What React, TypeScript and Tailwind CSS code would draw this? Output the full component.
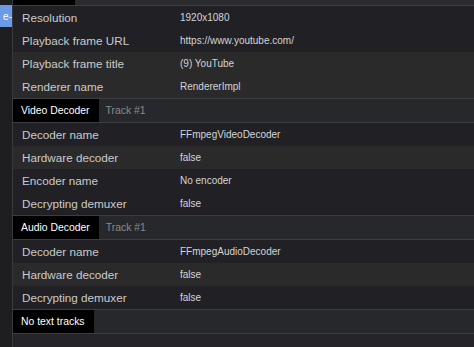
type Row = { label: string; value: string; alt?: boolean };

const topRows: Row[] = [
  { label: 'Resolution', value: '1920x1080' },
  { label: 'Playback frame URL', value: 'https://www.youtube.com/' },
  { label: 'Playback frame title', value: '(9) YouTube', alt: true },
  { label: 'Renderer name', value: 'RendererImpl', alt: true },
];

const videoRows: Row[] = [
  { label: 'Decoder name', value: 'FFmpegVideoDecoder' },
  { label: 'Hardware decoder', value: 'false', alt: true },
  { label: 'Encoder name', value: 'No encoder' },
  { label: 'Decrypting demuxer', value: 'false' },
];

const audioRows: Row[] = [
  { label: 'Decoder name', value: 'FFmpegAudioDecoder' },
  { label: 'Hardware decoder', value: 'false', alt: true },
  { label: 'Decrypting demuxer', value: 'false' },
];

function PropRow({ label, value, alt }: Row) {
  return (
    <div className={`flex h-[23px] items-center ${alt ? 'bg-[#2a2a2b]' : 'bg-[#212125]'}`}>
      <div className="w-[167px] shrink-0 pl-[9px] text-[11.7px] text-[#cacaca]">{label}</div>
      <div className="text-[10px] text-[#d4d4d4]">{value}</div>
    </div>
  );
}

function TabHeader({ active, inactive }: { active: string; inactive?: string }) {
  return (
    <div className="flex h-[25px] items-stretch border-y border-[#3c3d41] bg-[#27282c]">
      <div className="flex items-center bg-black pl-[8px] pr-[9px] text-[10.4px] text-white">{active}</div>
      {inactive && <div className="flex items-center pl-[7px] text-[10.4px] text-[#8a8a8d]">{inactive}</div>}
    </div>
  );
}

export default function App() {
  return (
    <div
      className="flex h-[347px] w-[474px] overflow-hidden bg-[#1e1e21]"
      style={{ fontFamily: '"Liberation Sans", Arial, sans-serif' }}
    >
      {/* left strip */}
      <div className="w-[13px] shrink-0 border-r border-[#3a3a3e] bg-[#1e1e21] pt-[5px]">
        <div className="flex h-[22px] items-center justify-end overflow-hidden bg-[#6b9be6] text-[10px] text-white">
          e-
        </div>
      </div>

      <div className="flex min-w-0 flex-1 flex-col bg-[#252529]">
        {/* top bar */}
        <div className="flex h-[5px] bg-[#2a2b2e]">
          <div className="w-[62px] bg-black" />
        </div>
        <div className="border-t border-[#3c3d41]">
          {topRows.map((r) => (
            <PropRow key={r.label} {...r} />
          ))}
        </div>

        <TabHeader active="Video Decoder" inactive="Track #1" />
        {videoRows.map((r) => (
          <PropRow key={r.label} {...r} />
        ))}

        <TabHeader active="Audio Decoder" inactive="Track #1" />
        {audioRows.map((r) => (
          <PropRow key={r.label} {...r} />
        ))}

        <TabHeader active="No text tracks" />
        <div className="flex-1 bg-[#252529]" />
      </div>
    </div>
  );
}
